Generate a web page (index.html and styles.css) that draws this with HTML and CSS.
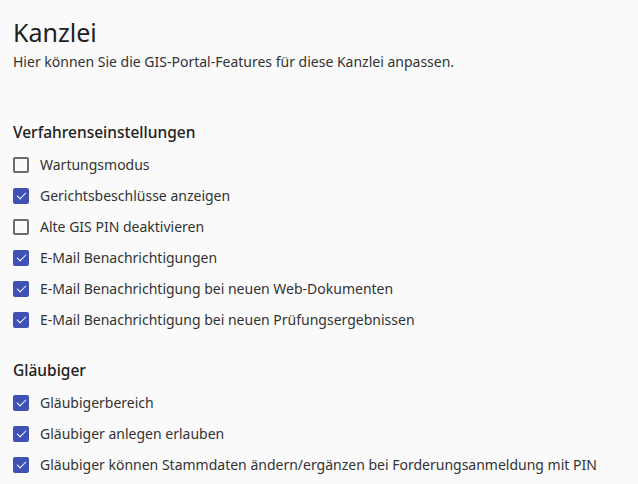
FILE: index.html
```html
<!DOCTYPE html>
<html lang="de">
<head>
    <meta charset="UTF-8">
    <meta name="viewport" content="width=device-width, initial-scale=1.0">
    <title>Kanzlei</title>
    <link rel="stylesheet" href="styles.css">
</head>
<body>
    <div class="page">
        <h1>Kanzlei</h1>
        <p class="subtitle">Hier können Sie die GIS-Portal-Features für diese Kanzlei anpassen.</p>

        <div class="section">
            <h2>Verfahrenseinstellungen</h2>
            <label class="option"><span class="box"></span>Wartungsmodus</label>
            <label class="option"><span class="box checked"></span>Gerichtsbeschlüsse anzeigen</label>
            <label class="option"><span class="box"></span>Alte GIS PIN deaktivieren</label>
            <label class="option"><span class="box checked"></span>E-Mail Benachrichtigungen</label>
            <label class="option"><span class="box checked"></span>E-Mail Benachrichtigung bei neuen Web-Dokumenten</label>
            <label class="option"><span class="box checked"></span>E-Mail Benachrichtigung bei neuen Prüfungsergebnissen</label>
        </div>

        <div class="section">
            <h2>Gläubiger</h2>
            <label class="option"><span class="box checked"></span>Gläubigerbereich</label>
            <label class="option"><span class="box checked"></span>Gläubiger anlegen erlauben</label>
            <label class="option"><span class="box checked"></span>Gläubiger können Stammdaten ändern/ergänzen bei Forderungsanmeldung mit PIN</label>
        </div>
    </div>
</body>
</html>
```

FILE: styles.css
```css
body {
    margin: 0;
    background-color: #fafafa;
    font-family: 'Noto Sans', 'Open Sans', sans-serif;
    color: #212121;
}
.page {
    padding: 14px 13px;
}
h1 {
    font-size: 25px;
    font-weight: 400;
    margin: 0;
    line-height: 36px;
}
.subtitle {
    font-size: 14px;
    margin: 2px 0 0 0;
    line-height: 20px;
    color: #333;
}
.section {
    margin-top: 48px;
}
.section + .section {
    margin-top: 23px;
}
h2 {
    font-size: 15.5px;
    font-weight: 500;
    margin: 0 0 5px 0;
    line-height: 24px;
}
.option {
    display: flex;
    align-items: center;
    height: 31px;
    font-size: 14px;
    color: #333;
}
.box {
    width: 16px;
    height: 16px;
    box-sizing: border-box;
    border: 2px solid #6b6b6b;
    border-radius: 2px;
    margin-right: 11px;
    flex-shrink: 0;
    position: relative;
}
.box.checked {
    border-color: #3f51b5;
    background-color: #3f51b5;
}
.box.checked::after {
    content: '';
    position: absolute;
    left: 4px;
    top: 0px;
    width: 4px;
    height: 8px;
    border: solid #fff;
    border-width: 0 1.5px 1.5px 0;
    transform: rotate(45deg);
}
```
